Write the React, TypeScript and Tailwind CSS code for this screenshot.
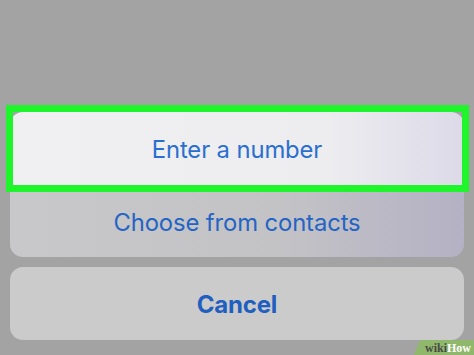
import React from "react";

export default function App() {
  return (
    <div
      className="relative w-[474px] h-[355px] overflow-hidden bg-[#a3a3a3] flex flex-col px-[10px] pt-[112px]"
      style={{ fontFamily: "Inter, 'Noto Sans', sans-serif" }}
    >
      <div className="flex flex-col rounded-[13px] overflow-hidden">
        <div className="h-[73px] flex items-center justify-center pt-[3px] bg-gradient-to-r from-[#f0f0f2] via-[#ededf0] via-70% to-[#dcdae8]">
          <span className="text-[23.8px] text-[#2a6fd0] tracking-[-0.1px]">Enter a number</span>
        </div>
        <div className="h-[72px] flex items-center justify-center pt-[4px] bg-gradient-to-r from-[#c8c8ca] via-[#c3c3c6] via-60% to-[#b4b1c4]">
          <span className="text-[23.8px] text-[#2464c4] tracking-[-0.1px]">Choose from contacts</span>
        </div>
      </div>
      <div className="mt-[10px] h-[73px] rounded-[13px] bg-[#cbcbcb] flex items-center justify-center pt-[2px]">
        <span className="text-[24px] font-bold text-[#1f5fc0] tracking-[-0.2px]">Cancel</span>
      </div>

      <div className="absolute left-[6px] top-[105px] w-[463px] h-[87px] border-[7px] border-[#1ff52b]" />

      <div
        className="absolute right-0 bottom-0 w-[60px] h-[15px] bg-[#8fb86c] flex items-center justify-end pr-[3px] text-[12px] font-bold leading-none"
        style={{ fontFamily: "'Liberation Serif', serif", clipPath: "polygon(6px 0, 100% 0, 100% 100%, 0 100%)" }}
      >
        <span className="text-[#4a4a44]">wiki</span>
        <span className="text-white">How</span>
      </div>
    </div>
  );
}
